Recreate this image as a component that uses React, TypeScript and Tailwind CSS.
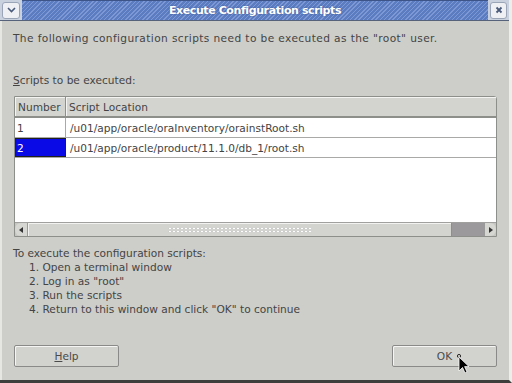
import React from "react";

const font = { fontFamily: '"DejaVu Sans", "Liberation Sans", sans-serif' };

function TitleBar() {
  return (
    <div className="flex h-[21px] items-stretch border-b border-[#55627a] bg-[#c9d1df]">
      <div className="flex w-[22px] items-center justify-center">
        <div className="flex h-[17px] w-[18px] items-center justify-center rounded-[3px] border border-[#9aa5b8] bg-[#eef0f4]">
          <svg width="9" height="6" viewBox="0 0 9 6">
            <path d="M1 1 L4.5 4.5 L8 1" stroke="#4a5a7a" strokeWidth="1.6" fill="none" />
          </svg>
        </div>
      </div>
      <div className="flex flex-1 items-center justify-center border-t border-[#3d5488] bg-[repeating-linear-gradient(135deg,#5b7cc1_0px,#5b7cc1_2px,#7d98d2_2px,#7d98d2_3px)]">
        <span className="text-[11px] font-bold tracking-[-0.4px] text-white [text-shadow:0_0_2px_#3a5390]">
          Execute Configuration scripts
        </span>
      </div>
      <div className="flex w-[21px] items-center justify-center">
        <div className="flex h-[17px] w-[17px] items-center justify-center rounded-[3px] border border-[#9aa5b8] bg-[#eef0f4]">
          <svg width="8" height="8" viewBox="0 0 8 8">
            <path d="M1.5 1.5 L6.5 6.5 M6.5 1.5 L1.5 6.5" stroke="#4a5a7a" strokeWidth="1.8" />
          </svg>
        </div>
      </div>
    </div>
  );
}

function Table() {
  return (
    <div className="ml-[1px] mr-[1px] flex h-[141px] flex-col rounded-tr-[3px] border border-[#8d8f8b] bg-white">
      <div className="flex h-[21px] border-b-2 border-[#8d8f8b] bg-[#d3d4d0] text-[#444]">
        <div className="flex w-[51px] items-center border-r border-[#8d8f8b] pl-[3px] shadow-[inset_1px_1px_0_#f4f4f2]">Number</div>
        <div className="flex flex-1 items-center pl-[3px] shadow-[inset_1px_1px_0_#f4f4f2]">Script Location</div>
      </div>
      <div className="flex h-[20px] border-b border-[#a9aaa7]">
        <div className="flex w-[51px] items-center border-r border-[#a9aaa7] pl-[2px]">1</div>
        <div className="flex flex-1 items-center pl-[4px]">/u01/app/oracle/oraInventory/orainstRoot.sh</div>
      </div>
      <div className="flex h-[20px] border-b border-[#a9aaa7]">
        <div className="flex w-[51px] items-center border border-[#202020] bg-[#0a0ae6] pl-[1px] text-white">2</div>
        <div className="flex flex-1 items-center pl-[4px]">/u01/app/oracle/product/11.1.0/db_1/root.sh</div>
      </div>
      <div className="flex-1" />
      <div className="flex h-[14px] border-t border-[#a0a19e] bg-[#c6c7c3]">
        <div className="flex w-[13px] items-center justify-center rounded-l-[6px] border-r border-[#9a9b98] bg-[#d6d7d3]">
          <svg width="4" height="6" viewBox="0 0 4 6">
            <path d="M4 0 L0 3 L4 6 Z" fill="#333" />
          </svg>
        </div>
        <div className="flex w-[424px] items-center justify-center border-r border-[#8d8f8b] bg-[#d3d4d0] shadow-[inset_1px_1px_0_#f2f2f0]">
          <div className="h-[6px] w-[143px] bg-[radial-gradient(circle,#ffffff_1px,#b5b6b2_1.2px,transparent_1.6px)] bg-[length:4px_3px]" />
        </div>
        <div className="flex-1 bg-[#9b999b]" />
        <div className="flex w-[12px] items-center justify-center rounded-r-[6px] border-l border-[#9a9b98] bg-[#d6d7d3]">
          <svg width="4" height="6" viewBox="0 0 4 6">
            <path d="M0 0 L4 3 L0 6 Z" fill="#333" />
          </svg>
        </div>
      </div>
    </div>
  );
}

function Button({ children }: { children: React.ReactNode }) {
  return (
    <div className="flex h-[22px] w-[105px] items-center justify-center rounded-[2px] border border-[#8a8b88] bg-[#d2d3cf] text-[#4a4a4a] shadow-[inset_1px_1px_0_#f5f5f3]">
      {children}
    </div>
  );
}

export default function App() {
  return (
    <div
      className="relative flex h-[383px] w-[512px] flex-col overflow-hidden border-b-[3px] border-r-[3px] border-b-[#3e3f3d] border-r-[#eceeea] bg-[#cdcec9] text-[10.6px] leading-[14px] text-[#444]"
      style={font}
    >
      <TitleBar />
      <div className="flex flex-1 flex-col border-l-[2px] border-[#e6e7e3] pl-[11px] pr-[11px]">
        <p className="mt-[10px] tracking-[0.4px]">
          The following configuration scripts need to be executed as the "root" user.
        </p>
        <p className="mt-[28px]">
          <span className="underline">S</span>cripts to be executed:
        </p>
        <div className="mt-[9px]">
          <Table />
        </div>
        <div className="mt-[9px]">
          <p>To execute the configuration scripts:</p>
          <ol className="pl-[16px]">
            <li>1. Open a terminal window</li>
            <li>2. Log in as "root"</li>
            <li>3. Run the scripts</li>
            <li>4. Return to this window and click "OK" to continue</li>
          </ol>
        </div>
        <div className="mt-[29px] flex justify-between pl-[1px] pr-[1px]">
          <Button>
            <span>
              <span className="underline">H</span>elp
            </span>
          </Button>
          <Button>OK</Button>
        </div>
      </div>
      <svg className="absolute left-[456px] top-[353px]" width="14" height="20" viewBox="0 0 14 20">
        <circle cx="3" cy="3" r="1.6" fill="none" stroke="#000" strokeWidth="0.8" />
        <path d="M3 4 L3 18 L6.5 14.5 L9 20 L11 19 L8.6 13.6 L13 13.6 Z" fill="#000" stroke="#fff" strokeWidth="0.8" />
      </svg>
    </div>
  );
}
